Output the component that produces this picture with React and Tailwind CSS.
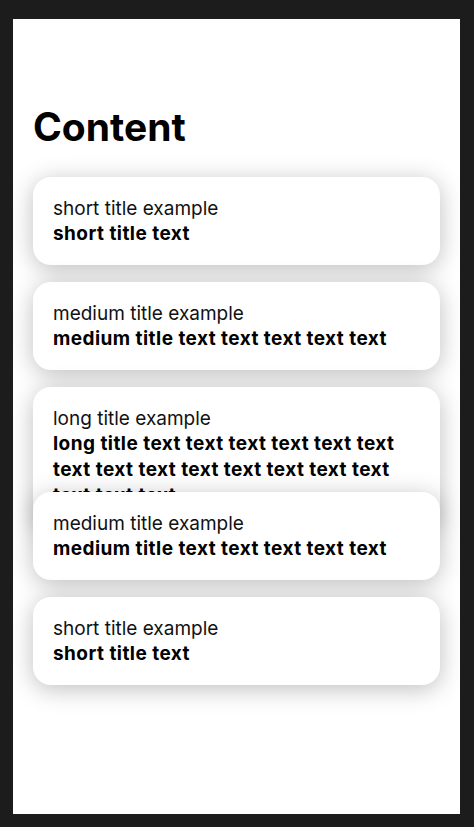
import React from 'react';

const items = [
  { label: 'short title example', title: 'short title text' },
  { label: 'medium title example', title: 'medium title text text text text text' },
  {
    label: 'long title example',
    title:
      'long title text text text text text text text text text text text text text text text text text',
  },
  { label: 'medium title example', title: 'medium title text text text text text' },
  { label: 'short title example', title: 'short title text' },
];

const Card = ({ label, title }) => (
  // fixed slot height; longer cards spill under the next one
  <div className="relative h-[86px]">
    <div className="min-h-[86px] rounded-[18px] bg-white px-5 pt-5 pb-[18px] shadow-[0_4px_24px_rgba(0,0,0,0.26)]">
      <p className="text-[19px] leading-6 text-[#111]">{label}</p>
      <p className="text-[19px] leading-[26px] font-bold tracking-[0.45px] text-black">{title}</p>
    </div>
  </div>
);

const App = () => {
  return (
    <div
      className="min-h-screen bg-[#1c1c1c] pt-[19px] pl-[13px] pr-[14px] pb-[13px]"
      style={{ fontFamily: 'Inter, "Noto Sans", sans-serif' }}
    >
      <div className="h-[795px] overflow-hidden bg-white px-5">
        <h1 className="pt-[88px] text-[39px] leading-10 font-bold text-black">Content</h1>

        <div className="mt-[30px] flex flex-col gap-[19px]">
          {items.map((item, i) => (
            <Card key={i} {...item} />
          ))}
        </div>
      </div>
    </div>
  );
};

export default App;
